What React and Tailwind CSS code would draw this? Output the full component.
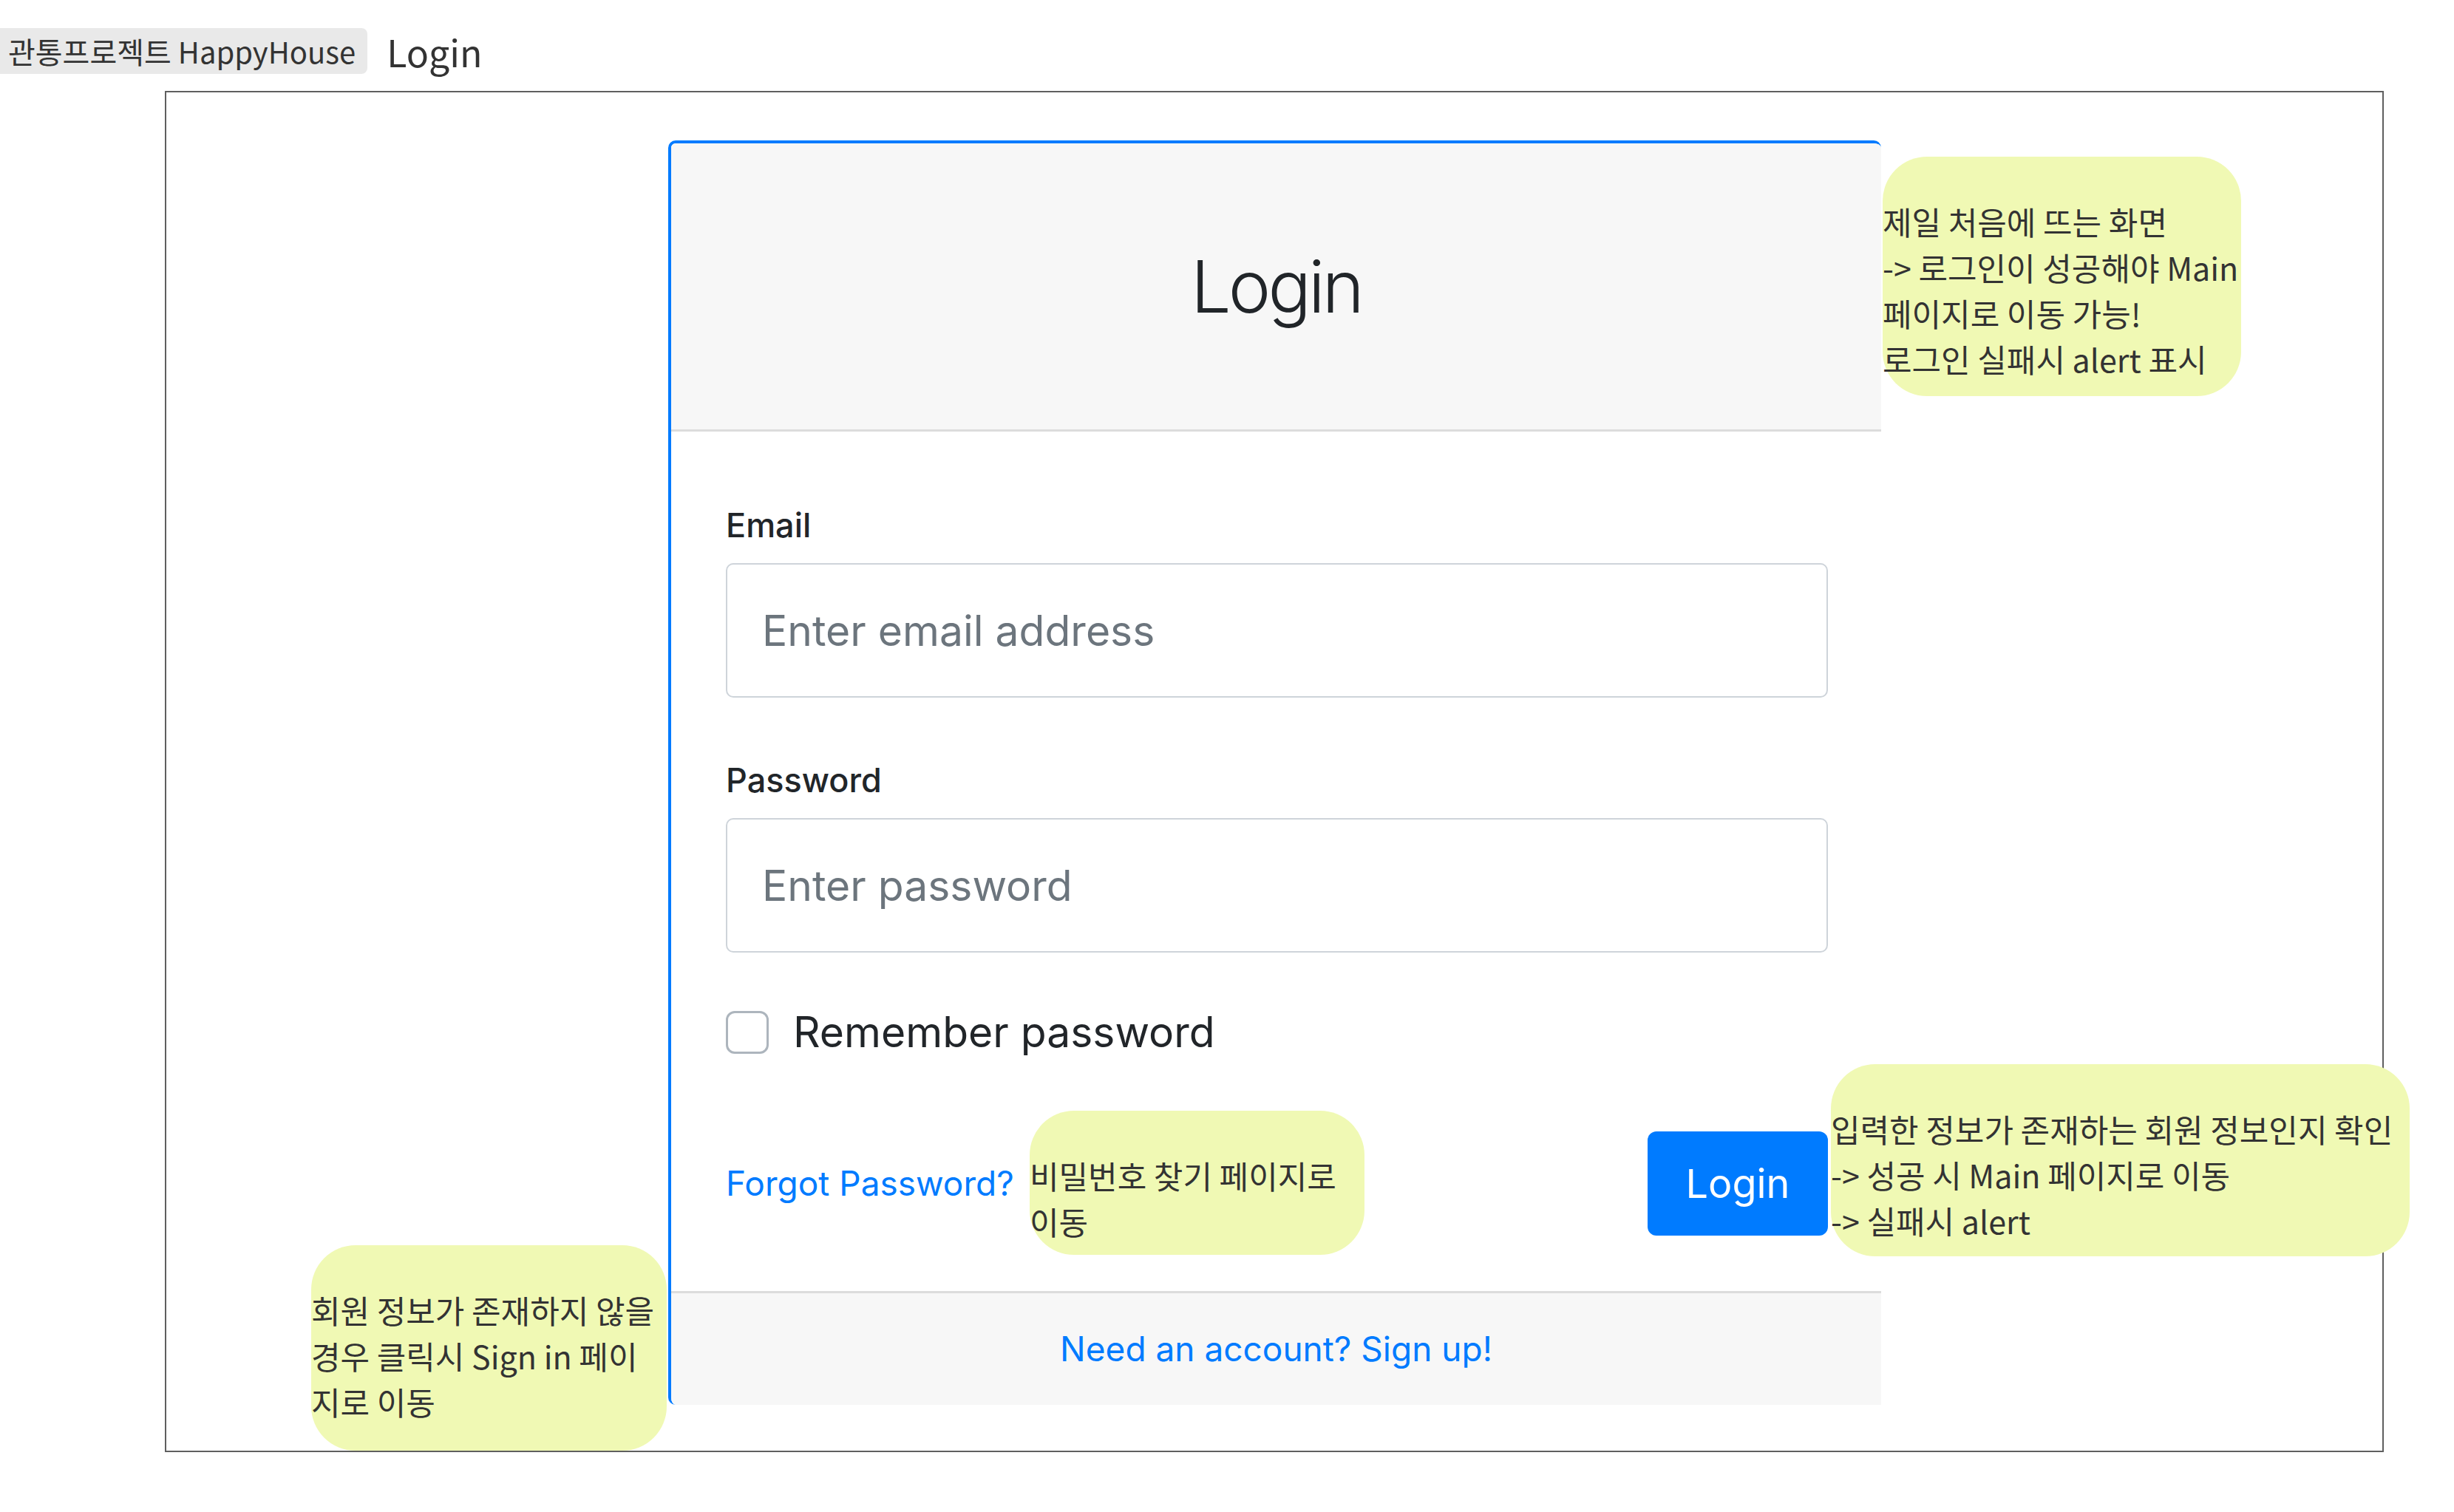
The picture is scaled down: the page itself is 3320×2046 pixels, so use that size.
import React from "react";

const notes = [
  {
    id: "first",
    pos: "left-[2547px] top-[212px] w-[485px] h-[324px]",
    lines: ["제일 처음에 뜨는 화면", "-> 로그인이 성공해야 Main", "페이지로 이동 가능!", "로그인 실패시 alert 표시"],
  },
  {
    id: "forgot",
    pos: "left-[1393px] top-[1503px] w-[453px] h-[195px]",
    lines: ["비밀번호 찾기 페이지로", "이동"],
  },
  {
    id: "login",
    pos: "left-[2477px] top-[1440px] w-[783px] h-[260px]",
    lines: ["입력한 정보가 존재하는 회원 정보인지 확인", "-> 성공 시 Main 페이지로 이동", "-> 실패시 alert"],
  },
  {
    id: "signup",
    pos: "left-[421px] top-[1685px] w-[481px] h-[278px]",
    lines: ["회원 정보가 존재하지 않을", "경우 클릭시 Sign in 페이", "지로 이동"],
  },
];

const Note = ({ pos, lines }) => (
  <div
    className={`absolute ${pos} rounded-[60px] bg-[#f0f9b4] pt-[56px] text-[43px] leading-[62px] text-[#333333] whitespace-nowrap font-['Noto_Sans_CJK_KR','Noto_Sans',sans-serif]`}
  >
    {lines.map((line) => (
      <div key={line}>{line}</div>
    ))}
  </div>
);

const App = () => {
  return (
    <div className="relative w-[3320px] h-[2046px] bg-white overflow-hidden">
      {/* page title bar */}
      <div className="flex items-center pt-[38px] font-['Noto_Sans_CJK_KR','Noto_Sans',sans-serif] text-[#333333]">
        <div className="h-[62px] flex items-center pl-[11px] pr-[16px] bg-[#e9e9e9] rounded-r-[8px] text-[40px]">
          관통프로젝트 HappyHouse
        </div>
        <div className="ml-[26px] text-[50px] leading-none">Login</div>
      </div>

      {/* frame */}
      <div className="mt-[23px] ml-[223px] w-[3002px] h-[1842px] border-2 border-[#5f5f5f] pl-[679px] pt-[65px] font-['Inter',sans-serif]">
        <div className="w-[1641px] border-l-4 border-t-4 border-[#007bff] rounded-t-[10px] rounded-bl-[10px] overflow-hidden">
          <div className="h-[390px] bg-[#f7f7f7] border-b-[3px] border-[#dcdcdc] flex items-center justify-center">
            <h3 className="text-[97px] font-light tracking-[-0.04em] text-[#212529]">Login</h3>
          </div>

          <div className="bg-white pl-[74px] pr-[72px] pt-[92px] pb-[75px]">
            <label className="block text-[45px] font-medium leading-[70px] text-[#212529] mb-[16px]">Email</label>
            <input
              type="email"
              placeholder="Enter email address"
              className="block w-full h-[182px] border-2 border-[#ced4da] rounded-[10px] px-[47px] text-[57px] text-[#495057] placeholder:text-[#6c757d] outline-none"
            />

            <label className="block mt-[77px] text-[45px] font-medium leading-[70px] text-[#212529] mb-[16px]">Password</label>
            <input
              type="password"
              placeholder="Enter password"
              className="block w-full h-[182px] border-2 border-[#ced4da] rounded-[10px] px-[47px] text-[57px] text-[#495057] placeholder:text-[#6c757d] outline-none"
            />

            <div className="mt-[79px] h-[58px] flex items-center gap-[33px]">
              <span className="w-[58px] h-[58px] border-[3px] border-[#adb5bd] rounded-[12px] bg-white" />
              <span className="text-[57px] leading-[58px] text-[#212529]">Remember password</span>
            </div>

            <div className="mt-[105px] flex items-center justify-between">
              <a className="text-[46px] text-[#007bff]">Forgot Password?</a>
              <button className="w-[244px] h-[141px] rounded-[12px] bg-[#007bff] text-white text-[54px]">
                Login
              </button>
            </div>
          </div>

          <div className="h-[154px] bg-[#f7f7f7] border-t-[3px] border-[#dcdcdc] flex items-center justify-center">
            <a className="text-[46px] text-[#007bff]">Need an account? Sign up!</a>
          </div>
        </div>
      </div>

      {notes.map((n) => (
        <Note key={n.id} pos={n.pos} lines={n.lines} />
      ))}
    </div>
  );
};

export default App;
